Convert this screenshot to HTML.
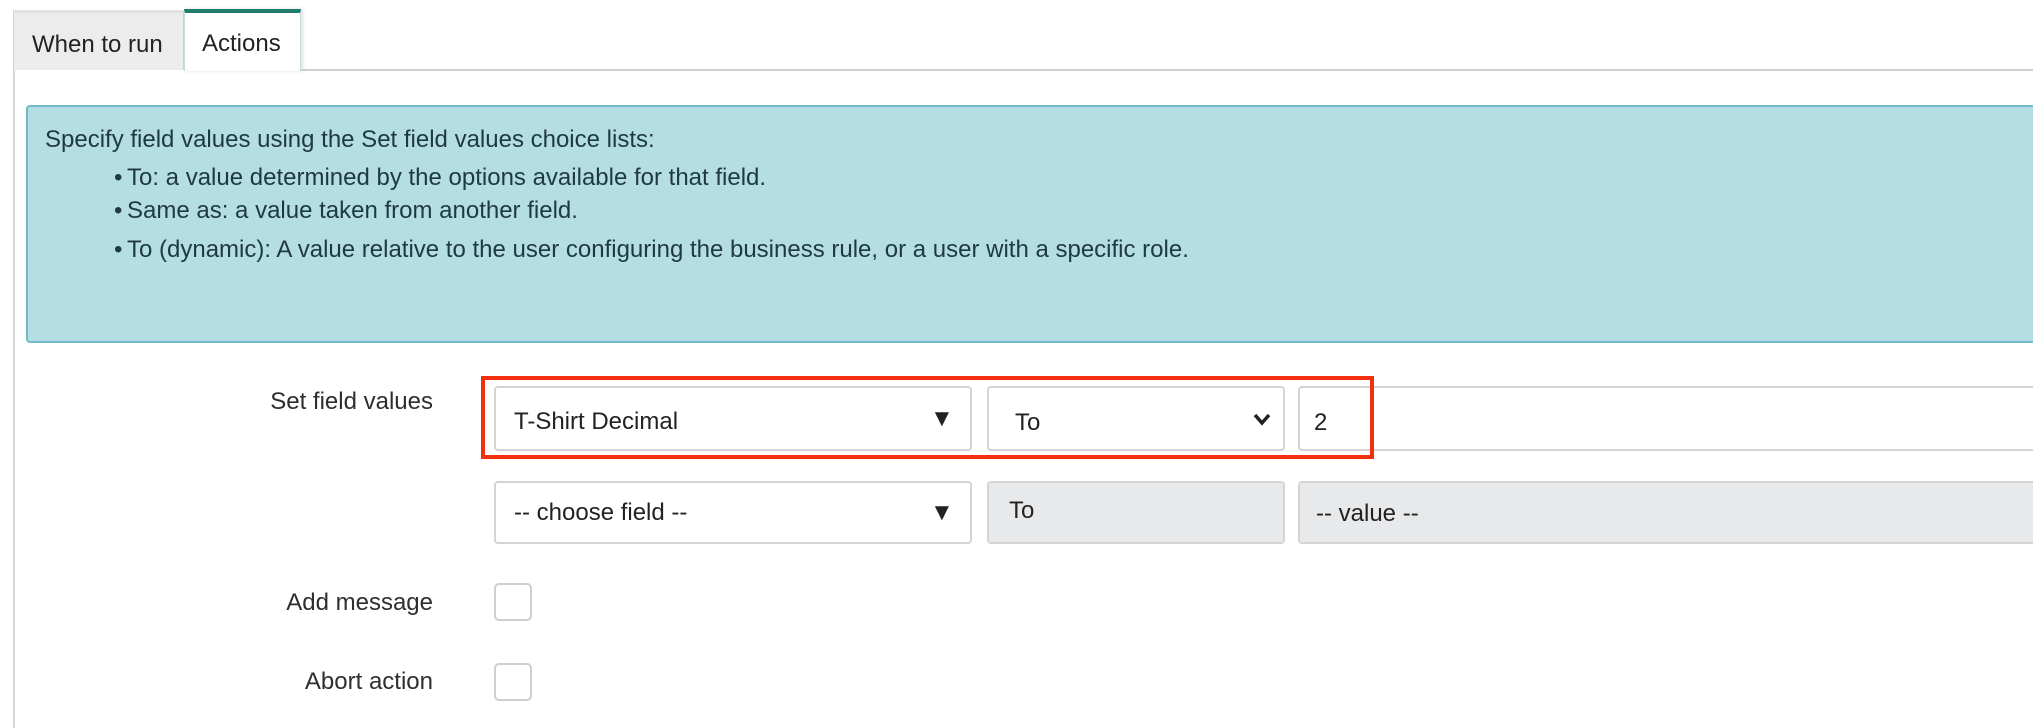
<!DOCTYPE html>
<html><head><style>
*{box-sizing:border-box;margin:0;padding:0}
body{width:2033px;height:728px;background:#fff;font-family:"Liberation Sans",sans-serif;color:#2e2e2e;position:relative;overflow:hidden;font-size:20px}
.abs{position:absolute}
.tab1{left:13px;top:10px;width:171px;height:60px;background:#ececec;border:1px solid #d0d0d0;border-bottom:none;border-top:3px solid #e2e2e2}
.tab2{left:184px;top:9px;width:117px;height:62px;background:#fff;border:1px solid #c8dcd8;border-top:4px solid #1f7d6d;border-bottom:none;box-shadow:2px 0 4px rgba(0,0,0,.12)}
.tabtxt{position:absolute;top:18px;font-size:24px;color:#222;white-space:nowrap}
.line{left:301px;top:69px;width:1732px;height:2px;background:#cfcfcf}
.lborder{left:13px;top:70px;width:2px;height:658px;background:#d8d8d8}
.info{left:26px;top:105px;width:2030px;height:238px;background:#b5dde4;border:2px solid #6fbac6;border-radius:4px}
.t{position:absolute;font-size:24px;color:#1e3a40;white-space:nowrap}
.b{position:absolute;left:114px;font-size:24px;color:#1e3a40}
.lbl{position:absolute;right:1600px;font-size:24px;color:#2e2e2e;white-space:nowrap}
.box{position:absolute;border:2px solid #d4d4d4;border-radius:4px;background:#fff;font-size:24px;color:#222}
.box span{position:absolute;top:20px;left:18px;white-space:nowrap}
.grey{background:#e8e9eb}
.red{left:481px;top:376px;width:893px;height:83px;border:4px solid #f2300f}
.cb{position:absolute;left:494px;width:38px;height:38px;border:2px solid #cfcfcf;border-radius:5px}
</style></head><body>
<div class="abs tab1"><div class="tabtxt" style="left:18px">When to run</div></div>
<div class="abs tab2"><div class="tabtxt" style="left:17px;top:17px">Actions</div></div>
<div class="abs line"></div>
<div class="abs lborder"></div>
<div class="abs info"></div>
<div class="t" style="left:45px;top:126px">Specify field values using the Set field values choice lists:</div>
<div class="b" style="top:164px">•</div><div class="t" style="left:127px;top:164px">To: a value determined by the options available for that field.</div>
<div class="b" style="top:197px">•</div><div class="t" style="left:127px;top:197px">Same as: a value taken from another field.</div>
<div class="b" style="top:236px">•</div><div class="t" style="left:127px;top:236px">To (dynamic): A value relative to the user configuring the business rule, or a user with a specific role.</div>

<div class="lbl" style="top:388px">Set field values</div>
<div class="box" style="left:494px;top:386px;width:478px;height:65px"><span>T-Shirt Decimal</span><span style="left:434px;top:17px;font-size:24px">▼</span></div>
<div class="box" style="left:987px;top:386px;width:298px;height:65px"><span style="left:26px;top:21px">To</span>
<svg style="position:absolute;left:264px;top:25px" width="18" height="13" viewBox="0 0 18 13"><path d="M2 2 L9 10 L16 2" stroke="#222" stroke-width="3.5" fill="none"/></svg></div>
<div class="box" style="left:1298px;top:386px;width:760px;height:65px"><span style="left:14px;top:21px">2</span></div>
<div class="abs red"></div>

<div class="box" style="left:494px;top:481px;width:478px;height:63px"><span style="top:16px">-- choose field --</span><span style="left:434px;top:16px;font-size:24px">▼</span></div>
<div class="box grey" style="left:987px;top:481px;width:298px;height:63px"><span style="left:20px;top:14px">To</span></div>
<div class="box grey" style="left:1298px;top:481px;width:760px;height:63px"><span style="left:16px;top:17px">-- value --</span></div>

<div class="lbl" style="top:589px">Add message</div>
<div class="cb" style="top:583px"></div>
<div class="lbl" style="top:668px">Abort action</div>
<div class="cb" style="top:663px"></div>
</body></html>
